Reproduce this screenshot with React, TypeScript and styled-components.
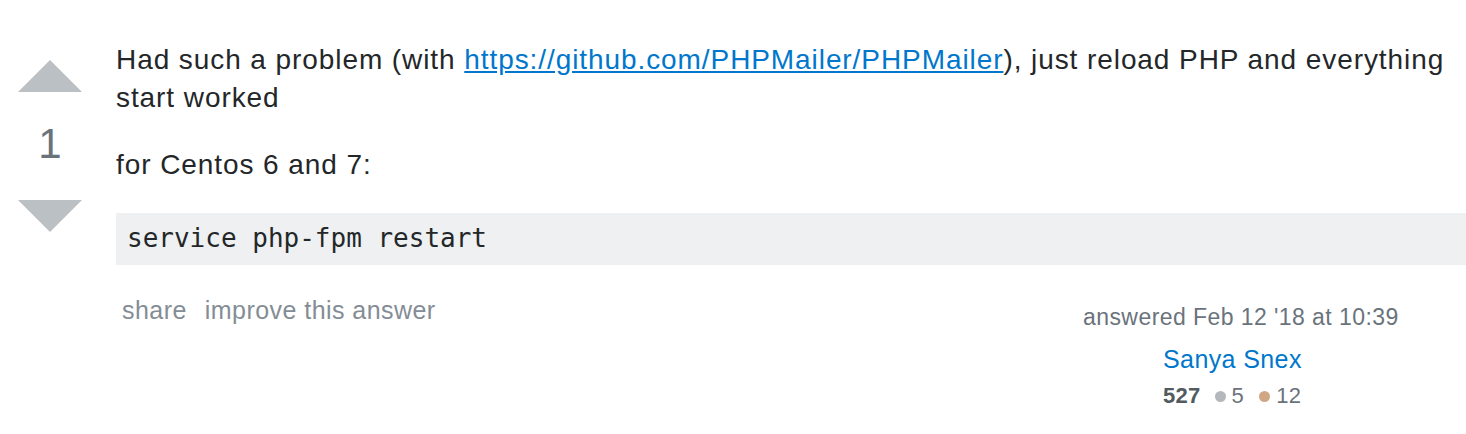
import React from "react";
import styled, { createGlobalStyle } from "styled-components";

const GlobalStyle = createGlobalStyle`
  html, body { margin: 0; padding: 0; background: #ffffff; }
  body { font-family: "Liberation Sans", Arial, sans-serif; color: #242729; }
`;

const Answer = styled.div`
  display: flex;
  align-items: flex-start;
  padding-top: 41px;
`;

const VoteCell = styled.div`
  width: 64px;
  margin-left: 18px;
  margin-right: 34px;
  padding-top: 19px;
  display: flex;
  flex-direction: column;
  align-items: center;
`;

const Arrow = styled.svg`
  display: block;
  width: 64px;
  height: 32px;
`;

const VoteCount = styled.div`
  font-size: 42px;
  line-height: 42px;
  color: #6a737c;
  margin: 31px 0 35px;
`;

const PostCell = styled.div`
  flex: 1;
  min-width: 0;
`;

const Paragraph = styled.p`
  margin: 0 0 29px;
  font-size: 28px;
  line-height: 38px;
  letter-spacing: 0.92px;
  color: #242729;
`;

const Link = styled.a`
  color: #0077cc;
  text-decoration: underline;
`;

const CodeBlock = styled.pre`
  margin: 0;
  background: #eff0f1;
  padding: 8px 11px 10px;
  font-family: "DejaVu Sans Mono", "Liberation Mono", monospace;
  font-size: 26px;
  line-height: 34px;
  color: #242729;
`;

const Footer = styled.div`
  display: flex;
  justify-content: space-between;
  align-items: flex-start;
  margin-top: 30px;
`;

const PostMenu = styled.div`
  display: flex;
  gap: 18px;
  padding-left: 6px;
  font-size: 25px;
  line-height: 30px;
  letter-spacing: 0.45px;
`;

const MenuLink = styled.span`
  color: #848d95;
`;

const UserCard = styled.div`
  width: 374px;
  margin-right: 22px;
  padding: 8px 0 0 13px;
  box-sizing: border-box;
`;

const ActionTime = styled.div`
  font-size: 23px;
  line-height: 28px;
  letter-spacing: 0.43px;
  color: #6a737c;
`;

const UserInfo = styled.div`
  display: flex;
  margin-top: 12px;
`;

const Gravatar = styled.div`
  width: 80px;
  flex: none;
`;

const UserDetails = styled.div`
  display: flex;
  flex-direction: column;
`;

const UserName = styled.span`
  color: #0077cc;
  font-size: 25px;
  line-height: 32px;
  letter-spacing: 0.4px;
`;

const Reputation = styled.div`
  display: flex;
  align-items: center;
  font-size: 22px;
  line-height: 30px;
  letter-spacing: 0.3px;
  margin-top: 6px;
  color: #6a737c;
`;

const RepScore = styled.span`
  font-weight: bold;
  color: #535a60;
  margin-right: 14px;
`;

const Badge = styled.span<{ $color: string }>`
  display: inline-flex;
  align-items: center;
  margin-right: 15px;
  &::before {
    content: "";
    width: 11px;
    height: 11px;
    border-radius: 50%;
    background: ${(p) => p.$color};
    margin-right: 6px;
  }
`;

export default function App() {
  return (
    <>
      <GlobalStyle />
      <Answer>
        <VoteCell>
          <Arrow viewBox="0 0 64 32">
            <polygon points="0,32 32,0 64,32" fill="#bbc0c4" />
          </Arrow>
          <VoteCount>1</VoteCount>
          <Arrow viewBox="0 0 64 32">
            <polygon points="0,0 64,0 32,32" fill="#bbc0c4" />
          </Arrow>
        </VoteCell>
        <PostCell>
          <Paragraph>
            Had such a problem (with{" "}
            <Link href="#">https://github.com/PHPMailer/PHPMailer</Link>), just
            reload PHP and everything start worked
          </Paragraph>
          <Paragraph>for Centos 6 and 7:</Paragraph>
          <CodeBlock>service php-fpm restart</CodeBlock>
          <Footer>
            <PostMenu>
              <MenuLink>share</MenuLink>
              <MenuLink>improve this answer</MenuLink>
            </PostMenu>
            <UserCard>
              <ActionTime>answered Feb 12 '18 at 10:39</ActionTime>
              <UserInfo>
                <Gravatar />
                <UserDetails>
                  <UserName>Sanya Snex</UserName>
                  <Reputation>
                    <RepScore>527</RepScore>
                    <Badge $color="#b4b8bc">5</Badge>
                    <Badge $color="#d1a684">12</Badge>
                  </Reputation>
                </UserDetails>
              </UserInfo>
            </UserCard>
          </Footer>
        </PostCell>
      </Answer>
    </>
  );
}
